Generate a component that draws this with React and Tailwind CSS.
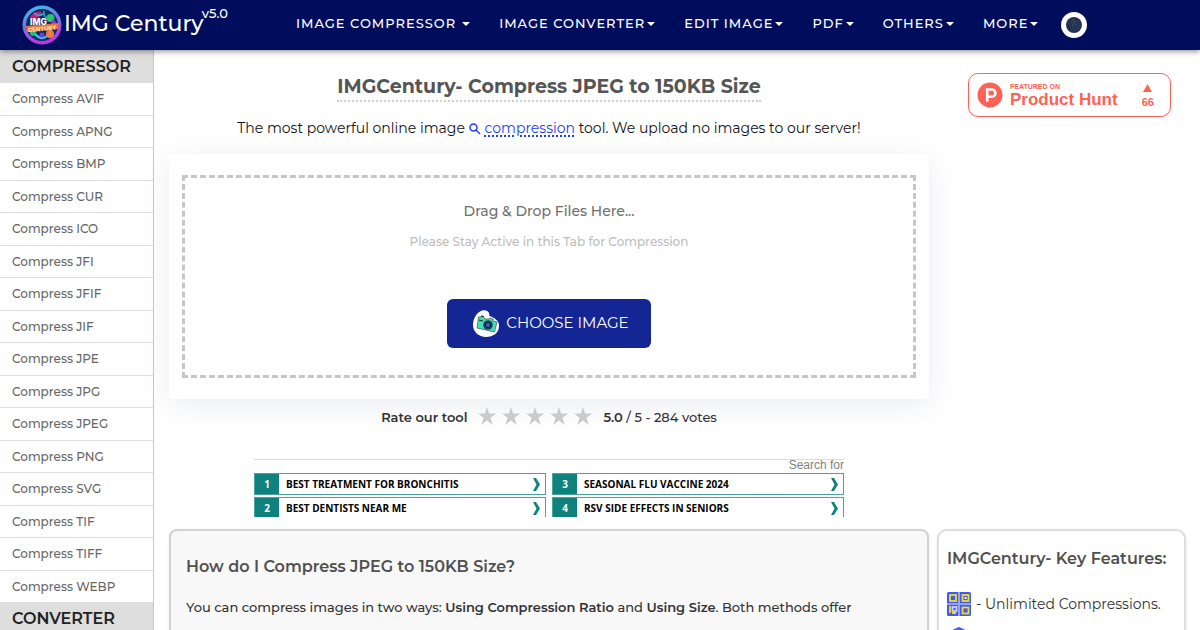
import React from 'react';

const navItems = ['IMAGE COMPRESSOR', 'IMAGE CONVERTER', 'EDIT IMAGE', 'PDF', 'OTHERS', 'MORE'];

const formats = [
  'AVIF', 'APNG', 'BMP', 'CUR', 'ICO', 'JFI', 'JFIF', 'JIF',
  'JPE', 'JPG', 'JPEG', 'PNG', 'SVG', 'TIF', 'TIFF', 'WEBP',
];

const searches = [
  { id: 1, label: 'BEST TREATMENT FOR BRONCHITIS' },
  { id: 3, label: 'SEASONAL FLU VACCINE 2024' },
  { id: 2, label: 'BEST DENTISTS NEAR ME' },
  { id: 4, label: 'RSV SIDE EFFECTS IN SENIORS' },
];

const Logo = () => (
  <svg viewBox="0 0 40 40" className="size-10 shrink-0" aria-hidden="true">
    <defs>
      <linearGradient id="ring" x1="0" y1="0" x2="0.3" y2="1">
        <stop offset="0" stopColor="#38c8ee" />
        <stop offset="0.5" stopColor="#6c7be0" />
        <stop offset="1" stopColor="#c832e8" />
      </linearGradient>
    </defs>
    <circle cx="20" cy="20" r="19.5" fill="url(#ring)" />
    <circle cx="20" cy="20" r="16" fill="#122a63" />
    <path d="M8 12q5-7 12-5l-3 5-6 4z" fill="#c91c73" />
    <path d="M12 8q4 4 9 1M22 6q-1 5 3 7" fill="none" stroke="#25b6d8" strokeWidth="1.5" />
    <circle cx="28.5" cy="13" r="4" fill="#29c46f" />
    <path d="M31 14q4 3 3 6l-5-1z" fill="#9a35d8" />
    <circle cx="11" cy="28" r="3" fill="#2bb673" />
    <circle cx="28" cy="29" r="4" fill="#f47b3c" />
    <path d="M13 29q6 7 12 2" fill="none" stroke="#3cc8f0" strokeWidth="2" />
    <circle cx="20" cy="30" r="2.5" fill="#6941dd" />
    <path d="M4 21l33-3-1 6-31 3z" fill="#ef7138" />
    <text x="8" y="20" fontSize="8.5" fontWeight="800" fill="#fff" fontFamily="Inter, sans-serif">IMG</text>
    <text x="6" y="26" fontSize="5.8" fontWeight="800" fill="#ffe6a5" fontFamily="Inter, sans-serif" transform="rotate(-5 20 24)">CENTURY</text>
  </svg>
);

const Caret = () => (
  <svg viewBox="0 0 8 4" className="h-1 w-2" fill="currentColor" aria-hidden="true">
    <path d="M0 0h8L4 4z" />
  </svg>
);

const Header = () => (
  <header className="relative z-10 flex h-[50px] shrink-0 items-center bg-[#000d5c] pl-[22px] text-white shadow-[0_1px_6px_rgba(0,0,0,0.5)]">
    <a href="#" className="flex w-[274px] shrink-0 items-center gap-0.5">
      <Logo />
      <span className="pb-0.5 text-[22px] leading-8 font-medium">IMG Century</span>
      <sup className="-mt-3 -ml-1 text-[13px] font-medium">v5.0</sup>
    </a>
    <nav className="flex items-center gap-[29px] pb-0.5">
      {navItems.map((item, i) => (
        <button
          key={item}
          type="button"
          className={`flex items-center whitespace-nowrap text-[13px] font-medium tracking-[1px] ${i === 0 ? 'gap-1.5' : 'gap-0.5'}`}
        >
          {item}
          <Caret />
        </button>
      ))}
    </nav>
    <button type="button" aria-label="Dark mode" className="ml-[23px] size-[26px] shrink-0 rounded-full bg-white p-[5px]">
      <svg viewBox="0 0 16 16" className="size-4" aria-hidden="true">
        <circle cx="8" cy="8" r="8" fill="#253451" />
        <path d="M7 3.5h1M9 5h1M7 6h1M9 7.500h1M6 8h1" stroke="#5566a5" strokeWidth="0.8" />
        <path d="M2 9.500h1M3 11h1" stroke="#0a1326" strokeWidth="1" />
      </svg>
    </button>
  </header>
);

const Sidebar = () => (
  <aside className="w-[154px] shrink-0 overflow-hidden border-r border-[#c8c8c8]">
    <h2 className="bg-[#dedede] px-3 pt-[5px] pb-1 text-base leading-6 font-semibold text-[#222]">COMPRESSOR</h2>
    <ul>
      {formats.map((format) => (
        <li key={format} className="border-b border-[#dedede] px-3 py-1.5 text-xs leading-relaxed font-medium text-[#666] last:border-b-0">
          <a href="#">Compress {format}</a>
        </li>
      ))}
    </ul>
    <h2 className="bg-[#dedede] px-3 pt-[5px] pb-1 text-base leading-6 font-semibold text-[#222]">CONVERTER</h2>
  </aside>
);

const ProductHunt = () => (
  <a href="#" className="flex h-11 w-[203px] items-center rounded-[10px] border border-[#ff6154] pr-4 pl-2 font-['Liberation_Sans',Arial,sans-serif] font-bold text-[#ff6154]">
    <svg viewBox="0 0 26 26" className="mr-[7px] size-[26px]" aria-hidden="true">
      <circle cx="13" cy="13" r="12.500" fill="#ff6154" />
      <path d="M10.200 19.500V7.500h4.600a3.600 3.600 0 0 1 0 7.200h-4.600" fill="none" stroke="#fff" strokeWidth="2.600" />
    </svg>
    <span className="flex flex-col pt-0.5">
      <span className="text-[7px] leading-2">FEATURED ON</span>
      <span className="text-[17px] leading-[18px]">Product Hunt</span>
    </span>
    <span className="ml-auto flex flex-col items-center gap-1 pt-0.5">
      <svg viewBox="0 0 9 8" className="h-2 w-[9px]" fill="currentColor" aria-hidden="true">
        <path d="M4.500 0L9 8H0z" />
      </svg>
      <span className="text-[11px] leading-3">66</span>
    </span>
  </a>
);

const CameraIcon = () => (
  <svg viewBox="0 0 26 27" className="h-[27px] w-[26px]" aria-hidden="true">
    <path d="M7 1.500C10-.5 15 0 16 3c.7 2-.5 3 3 4 4 2 7 4 7 9 0 7-6 11-13 11S0 22 0 15C0 9 3 4 7 1.500z" fill="#fff" />
    <path d="M5.500 7l5-.5L12 9h4l1-1 3 1v2l4 1-2.500 10L4 18z" fill="#3fe0b4" stroke="#333" strokeWidth="0.6" />
    <path d="M8 5.800l3 .8M6 10l4 1" stroke="#222" strokeWidth="1" />
    <circle cx="15" cy="15" r="4.800" fill="#263b63" />
    <circle cx="15" cy="15" r="2.500" fill="#3b65c9" stroke="#0b1730" strokeWidth="1" />
  </svg>
);

const DropZone = () => (
  <section className="bg-white px-[13px] py-[21px] shadow-[0_6px_28px_rgba(30,40,90,0.09)]">
    <div className="flex flex-col items-center border-3 border-dashed border-[#c6c6c6] pt-[21px] pb-[27px]">
      <p className="text-sm leading-6 font-medium text-[#707070]">Drag &amp; Drop Files Here...</p>
      <p className="mt-2 text-xs leading-[22px] font-medium text-[#bdbdbd]">Please Stay Active in this Tab for Compression</p>
      <button type="button" className="mt-[46px] flex h-[49px] items-center gap-[7px] rounded-md bg-[#132694] pr-[22px] pl-[26px] text-[15px] text-white">
        <CameraIcon />
        CHOOSE IMAGE
      </button>
    </div>
  </section>
);

const Rating = () => (
  <div className="mt-1.5 flex items-center justify-center text-[13px] leading-6 text-[#333]">
    <span className="font-semibold">Rate our tool</span>
    <span className="mr-3 ml-2.5 flex gap-1.5 pb-0.5">
      {[1, 2, 3, 4, 5].map((n) => (
        <button key={n} type="button" aria-label={`Rate ${n}`}>
          <svg viewBox="0 0 18 18" className="size-[18px]" fill="#cbcbcb" aria-hidden="true">
            <path d="M9 0l2.200 6.500H18l-5.500 4.200 2.100 7L9 13.500l-5.600 4.200 2.100-7L0 6.500h6.800z" />
          </svg>
        </button>
      ))}
    </span>
    <span className="font-medium"><b className="font-semibold">5.0</b> / 5 - 284 votes</span>
  </div>
);

const SearchAds = () => (
  <div className="mx-auto mt-[30px] h-[58px] max-w-[590px] overflow-hidden border-t border-[#dcdcdc]">
    <p className="pb-0.5 text-right font-['Liberation_Sans',Arial,sans-serif] text-xs leading-[11px] text-[#808080]">Search for</p>
    <div className="grid grid-cols-2 gap-x-1.5 gap-y-0.5 font-['Open_Sans',sans-serif] text-[10px] font-bold">
      {searches.map(({ id, label }) => (
        <a key={id} href="#" className="flex h-[22px] items-center border border-[#4ba39e] bg-white text-black">
          <span className="flex h-full w-6 items-center justify-center bg-[#0f827d] text-white">{id}</span>
          <span className="ml-[7px]">{label}</span>
          <svg viewBox="0 0 7 13" className="mr-[5px] ml-auto h-[13px] w-[7px]" fill="#0f827d" aria-hidden="true">
            <path d="M0 0h3l4 6.500L3 13H0l3.500-6.500z" />
          </svg>
        </a>
      ))}
    </div>
  </div>
);

const GridIcon = () => (
  <svg viewBox="0 0 24 24" className="size-6" aria-hidden="true">
    <rect width="24" height="24" rx="1.500" fill="#4059f0" />
    <path d="M11 0h2v24h-2zM0 11h24v2H0z" fill="#98a5f5" />
    <g strokeWidth="1.800">
      <rect x="3" y="3" width="6" height="6" fill="#4059f0" stroke="#f0dc28" />
      <rect x="15.500" y="3" width="6" height="6" fill="#4059f0" stroke="#f0dc28" />
      <rect x="15.500" y="15.500" width="6" height="6" fill="#4059f0" stroke="#f0dc28" />
      <path d="M3 14v7M5 21h4" stroke="#f0dc28" />
      <rect x="5.500" y="15" width="4" height="4" fill="#4059f0" stroke="#c9cffa" />
    </g>
    <rect x="17.500" y="5" width="2" height="2" fill="#fff" />
  </svg>
);

const App = () => {
  return (
    <div className="flex h-screen flex-col overflow-hidden bg-white font-[Montserrat,Inter,sans-serif] text-[#333]">
      <Header />
      <div className="flex min-h-0 flex-1">
        <Sidebar />
        <main className="grid flex-1 grid-cols-[minmax(0,1fr)_249px] content-start gap-x-2 pr-3.5 pl-[15px]">
          <div>
            <div className="pt-6 text-center">
              <h1 className="inline-block border-b-2 border-dotted border-[#d0d0d0] text-[19px] leading-[26px] font-bold text-[#555]">
                IMGCentury- Compress JPEG to 150KB Size
              </h1>
              <p className="my-3.5 text-sm leading-6 text-[#111]">
                The most powerful online image{' '}
                <a href="#" className="text-[#1f3df5]">
                  <svg viewBox="0 0 12 12" className="mr-1 inline size-3 align-middle" fill="none" stroke="currentColor" strokeWidth="1.500" aria-hidden="true">
                    <circle cx="4.500" cy="4.500" r="3.500" />
                    <path d="M7 7l4 4" />
                  </svg>
                  <span className="underline decoration-dotted decoration-2 underline-offset-2">compression</span>
                </a>{' '}
                tool. We upload no images to our server!
              </p>
            </div>
            <DropZone />
            <Rating />
            <SearchAds />
          </div>
          <div className="flex items-start justify-end pt-[23px] pr-[15px]">
            <ProductHunt />
          </div>
          <article className="mt-3 h-40 rounded-lg border-2 border-[#d2d3d6] bg-[#f8f8f8] px-[15px] pt-5 shadow-sm">
            <h2 className="text-base leading-8 font-semibold text-[#505050]">How do I Compress JPEG to 150KB Size?</h2>
            <p className="mt-3 text-[13px] leading-6 font-medium">
              You can compress images in two ways: <b className="font-semibold">Using Compression Ratio</b> and{' '}
              <b className="font-semibold">Using Size</b>. Both methods offer
            </p>
          </article>
          <section className="mt-3 h-40 rounded-[10px] border-2 border-[#dedede] bg-white px-2 pt-3 shadow-sm">
            <h2 className="text-base leading-8 font-semibold whitespace-nowrap text-[#505050]">IMGCentury- Key Features:</h2>
            <ul className="mt-[17px] flex flex-col gap-[11px] text-sm leading-6">
              <li className="flex items-center gap-[5px]">
                <GridIcon />
                - Unlimited Compressions.
              </li>
              <li>
                <svg viewBox="0 0 24 24" className="size-6" aria-hidden="true">
                  <path d="M12 0l11 5v14l-11 5-11-5V5z" fill="#4059f0" />
                </svg>
              </li>
            </ul>
          </section>
        </main>
      </div>
    </div>
  );
};

export default App;
